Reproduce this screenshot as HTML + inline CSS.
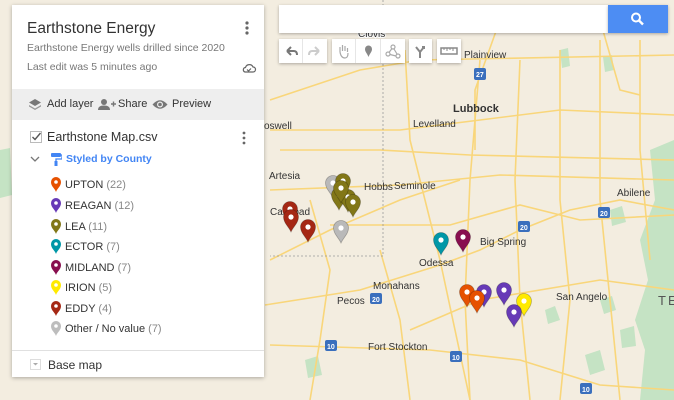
<!DOCTYPE html>
<html><head><meta charset="utf-8"><style>
*{margin:0;padding:0;box-sizing:border-box}
body{width:674px;height:400px;overflow:hidden;font-family:"Liberation Sans",Roboto,sans-serif;background:#f3ede0;position:relative}
#map{position:absolute;left:0;top:0}
.panel{position:absolute;left:12px;top:5px;width:252px;height:372px;background:#fff;box-shadow:0 1px 4px rgba(0,0,0,.3)}
.t{position:absolute;white-space:nowrap}
.bar{position:absolute;left:0;top:84px;width:252px;height:31px;background:#eeeeee}
.leg{position:absolute;left:42px;width:200px;font-size:11px;color:#333;height:20px;white-space:nowrap}
.leg span{color:#888}
.leg svg{position:absolute;left:-4px;top:-3px}
.leg b{font-weight:normal;position:absolute;left:11px;top:0;white-space:nowrap}
.search{position:absolute;left:279px;top:5px;width:329px;height:28px;background:#fff;box-shadow:0 1px 3px rgba(0,0,0,.3)}
.sbtn{position:absolute;left:608px;top:5px;width:60px;height:28px;background:#4d8df3;box-shadow:0 1px 3px rgba(0,0,0,.3)}
.tb{position:absolute;top:39px;height:24px;background:#fff;box-shadow:0 1px 3px rgba(0,0,0,.3)}
.tb div{position:absolute;top:0;height:24px;border-right:1px solid #e6e6e6}
</style></head><body>
<svg id="map" width="674" height="400" viewBox="0 0 674 400">
<rect width="674" height="400" fill="#f3ede0"/>
<g fill="#c5e3c4">
<path d="M650 150 L674 140 L674 400 L640 400 L645 350 L635 320 L648 280 L640 240 L655 200 Z"/>
<path d="M610 210 L622 206 L626 222 L612 226 Z"/>
<path d="M600 300 L612 296 L616 310 L604 314 Z"/>
<path d="M620 330 L634 326 L636 346 L622 348 Z"/>
<path d="M545 310 L555 306 L560 320 L548 324 Z"/>
<path d="M585 355 L600 350 L605 370 L590 375 Z"/>
<path d="M560 50 L568 48 L570 66 L562 68 Z"/>
<path d="M603 57 L612 55 L614 70 L605 72 Z"/>
<path d="M305 360 L318 356 L322 375 L308 378 Z"/>
<path d="M0 150 L10 148 L12 195 L0 198 Z"/>
</g>
<g fill="none" stroke="#f9d67a" stroke-width="1.6">
<path d="M270 130 L400 130 L560 110 L674 115"/>
<path d="M280 150 L380 150 L470 155 L674 160"/>
<path d="M270 190 L400 185 L500 175 L674 180"/>
<path d="M330 225 L450 225 L520 205 L580 220 L674 215"/>
<path d="M265 305 L360 290 L440 265 L480 250 L520 230 L570 210 L620 200 L674 210"/>
<path d="M270 345 L430 350 L520 360 L600 385 L674 390"/>
<path d="M405 50 L410 140 L440 260 L470 400"/>
<path d="M480 60 L470 180 L465 300 L470 400"/>
<path d="M520 60 L515 180 L520 300 L530 400"/>
<path d="M560 50 L560 200 L570 300 L560 400"/>
<path d="M600 40 L600 200 L610 300 L620 400"/>
<path d="M640 40 L640 150 L650 260"/>
<path d="M500 20 L475 90 L475 150"/>
<path d="M270 100 L360 70 L420 60 L674 55"/>
<path d="M310 200 L330 270 L320 340 L310 400"/>
<path d="M380 250 L400 320 L410 400"/>
<path d="M270 260 L330 230 L400 200 L460 180"/>
<path d="M480 300 L600 280 L674 290"/>
<path d="M410 330 L480 300"/>
<path d="M600 20 L620 90 L640 95"/>
</g>
<g fill="none" stroke="#999" stroke-width=".8" stroke-dasharray="2 2">
<path d="M383 0 L383 256 L270 256"/>
</g>
<g font-size="10" fill="#333" font-family="Liberation Sans,sans-serif">
<text x="358" y="37" stroke="#fff" stroke-width="2" paint-order="stroke">Clovis</text>
<text x="464" y="58">Plainview</text>
<text x="453" y="112" font-weight="bold" font-size="11">Lubbock</text>
<text x="413" y="127">Levelland</text>
<text x="264" y="129">oswell</text>
<text x="269" y="179">Artesia</text>
<text x="364" y="190">Hobbs</text>
<text x="394" y="189">Seminole</text>
<text x="270" y="215">Carlsbad</text>
<text x="480" y="245">Big Spring</text>
<text x="419" y="266">Odessa</text>
<text x="373" y="289">Monahans</text>
<text x="337" y="304">Pecos</text>
<text x="368" y="350">Fort Stockton</text>
<text x="556" y="300">San Angelo</text>
<text x="617" y="196">Abilene</text>
<text x="658" y="305" font-size="13" letter-spacing="2" fill="#555">TE</text>
</g>
<g font-size="7" font-weight="bold" fill="#fff">
<g><rect x="474" y="68" width="12" height="12" rx="2" fill="#3a6fbd"/><text x="476" y="77">27</text></g>
<g><rect x="518" y="221" width="12" height="11" rx="2" fill="#3a6fbd"/><text x="520" y="230">20</text></g>
<g><rect x="598" y="207" width="12" height="11" rx="2" fill="#3a6fbd"/><text x="600" y="216">20</text></g>
<g><rect x="370" y="293" width="12" height="11" rx="2" fill="#3a6fbd"/><text x="372" y="302">20</text></g>
<g><rect x="325" y="340" width="12" height="11" rx="2" fill="#3a6fbd"/><text x="327" y="349">10</text></g>
<g><rect x="450" y="351" width="12" height="11" rx="2" fill="#3a6fbd"/><text x="452" y="360">10</text></g>
<g><rect x="580" y="383" width="12" height="11" rx="2" fill="#3a6fbd"/><text x="582" y="392">10</text></g>
</g>
<defs>
<g id="p"><path d="M0 0 C-2 -5 -7.5 -9 -7.5 -15 A7.5 7.5 0 1 1 7.5 -15 C7.5 -9 2 -5 0 0Z" stroke="rgba(0,0,0,.25)" stroke-width=".8"/><circle cx="0" cy="-15" r="2.6" fill="#fff"/></g>
</defs>
<use href="#p" x="333" y="198" fill="#b9b9b9"/>
<use href="#p" x="343" y="196" fill="#827717"/>
<use href="#p" x="339" y="210" fill="#827717"/>
<use href="#p" x="348" y="212" fill="#827717"/>
<use href="#p" x="353" y="217" fill="#827717"/>
<use href="#p" x="341" y="203" fill="#827717"/>
<use href="#p" x="290" y="224" fill="#a52714"/>
<use href="#p" x="291" y="232" fill="#a52714"/>
<use href="#p" x="308" y="242" fill="#a52714"/>
<use href="#p" x="341" y="243" fill="#b9b9b9"/>
<use href="#p" x="441" y="255" fill="#0097a7"/>
<use href="#p" x="463" y="252" fill="#880e4f"/>
<use href="#p" x="484" y="307" fill="#673ab7"/>
<use href="#p" x="467" y="307" fill="#e65100"/>
<use href="#p" x="477" y="313" fill="#e65100"/>
<use href="#p" x="504" y="305" fill="#673ab7"/>
<use href="#p" x="524" y="316" fill="#ffea00"/>
<use href="#p" x="514" y="327" fill="#673ab7"/>
</svg>

<div class="search"></div>
<div class="sbtn"><svg width="60" height="28"><circle cx="28" cy="12.5" r="4" fill="none" stroke="#fff" stroke-width="2"/><path d="M31 15.5 L35 19.5" stroke="#fff" stroke-width="2.4"/></svg></div>
<div class="tb" style="left:279px;width:48px"><div style="left:0;width:24px"></div>
<svg width="48" height="24"><path d="M8 12 L12 8 M8 12 L12 16 M8 12 H15 Q18 12 18 16" fill="none" stroke="#777" stroke-width="2"/><path d="M40 12 L36 8 M40 12 L36 16 M40 12 H33 Q30 12 30 16" fill="none" stroke="#ccc" stroke-width="2"/></svg></div>
<div class="tb" style="left:332px;width:73px"><div style="left:0;width:24px"></div><div style="left:24px;width:25px"></div>
<svg width="73" height="24"><path d="M8 13 V8 M10.5 12 V6 M13 12 V7 M15.5 13 V9 M8 13 Q9 19 13 19 Q16 19 16 14" fill="none" stroke="#aaa" stroke-width="1.2"/><path d="M36.5 18 C35 14 33 13 33 10 A3.5 3.5 0 1 1 40 10 C40 13 38 14 36.5 18Z" fill="#888"/><g fill="none" stroke="#aaa" stroke-width="1.2"><circle cx="56" cy="15" r="2"/><circle cx="61" cy="8" r="2"/><circle cx="66" cy="17" r="2"/><path d="M57 13.5 L60 9.5 M58 15.5 L64 17 M62 10 L65 15"/></g></svg></div>
<div class="tb" style="left:409px;width:23px"><svg width="23" height="24"><path d="M7 8 L11 13 V19 M11 13 L15 8 M13 8 H15 V10" fill="none" stroke="#888" stroke-width="2"/></svg></div>
<div class="tb" style="left:437px;width:24px"><svg width="24" height="24"><rect x="4" y="9" width="16" height="6" fill="none" stroke="#888" stroke-width="1.5"/><path d="M7 9 V11 M10 9 V12 M13 9 V11 M16 9 V12" stroke="#888"/></svg></div>

<div class="panel">
<div class="t" style="left:15px;top:15px;font-size:15.5px;color:#333">Earthstone Energy</div>
<svg class="t" style="left:232px;top:15px" width="6" height="16"><circle cx="3" cy="3" r="1.6" fill="#666"/><circle cx="3" cy="8" r="1.6" fill="#666"/><circle cx="3" cy="13" r="1.6" fill="#666"/></svg>
<div class="t" style="left:15px;top:37px;font-size:10.5px;color:#777">Earthstone Energy wells drilled since 2020</div>
<div class="t" style="left:15px;top:56px;font-size:10.5px;color:#777">Last edit was 5 minutes ago</div>
<svg class="t" style="left:229px;top:57px" width="16" height="12"><path d="M4 10 H12 A2.5 2.5 0 0 0 12 5 A4 4 0 0 0 4.5 5.5 A2.3 2.3 0 0 0 4 10Z M6 7.5 L7.5 9 L10 6.5" fill="none" stroke="#666" stroke-width="1.2"/></svg>
<div class="bar">
<svg class="t" style="left:16px;top:9px" width="14" height="13"><path d="M7 1 L13 4.5 L7 8 L1 4.5Z" fill="#777"/><path d="M1 7 L7 10.5 L13 7 L13 8.5 L7 12 L1 8.5Z" fill="#999"/></svg>
<div class="t" style="left:35px;top:9px;font-size:11px;color:#333">Add layer</div>
<svg class="t" style="left:86px;top:9px" width="18" height="13"><circle cx="6" cy="4" r="3" fill="#777"/><path d="M0 12 Q0 7.5 6 7.5 Q12 7.5 12 12Z" fill="#777"/><path d="M13 6 H18 M15.5 3.5 V8.5" stroke="#777" stroke-width="1.4"/></svg>
<div class="t" style="left:106px;top:9px;font-size:11px;color:#333">Share</div>
<svg class="t" style="left:140px;top:10px" width="16" height="11"><path d="M0.5 5.5 Q8 -3 15.5 5.5 Q8 14 0.5 5.5Z" fill="#777"/><circle cx="8" cy="5.5" r="3" fill="#eee"/><circle cx="8" cy="5.5" r="1.8" fill="#777"/></svg>
<div class="t" style="left:160px;top:9px;font-size:11px;color:#333">Preview</div>
</div>
<svg class="t" style="left:18px;top:126px" width="12" height="12"><rect x=".5" y=".5" width="11" height="11" fill="#fff" stroke="#bbb"/><path d="M2.5 6 L5 8.5 L10.5 2" fill="none" stroke="#555" stroke-width="1.4"/></svg>
<div class="t" style="left:35px;top:125px;font-size:12.5px;color:#333">Earthstone Map.csv</div>
<svg class="t" style="left:229px;top:126px" width="6" height="14"><circle cx="3" cy="2" r="1.4" fill="#666"/><circle cx="3" cy="7" r="1.4" fill="#666"/><circle cx="3" cy="12" r="1.4" fill="#666"/></svg>
<svg class="t" style="left:18px;top:151px" width="10" height="7"><path d="M1 1 L5 5 L9 1" fill="none" stroke="#777" stroke-width="1.3"/></svg>
<svg class="t" style="left:38px;top:148px" width="12" height="13"><rect x="1" y="0" width="10" height="4" rx="1" fill="#4285f4"/><path d="M11 2 H12 V6 H6 V8" fill="none" stroke="#4285f4" stroke-width="1.3"/><rect x="4.5" y="8" width="3" height="5" fill="#4285f4"/></svg>
<div class="t" style="left:54px;top:148px;font-size:10.5px;color:#4285f4;font-weight:bold">Styled by County</div>

<svg width="0" height="0" style="position:absolute"><defs><g id="lp"><path d="M6 16 C5 12.5 1 10.5 1 6 A5 5 0 1 1 11 6 C11 10.5 7 12.5 6 16Z"/><circle cx="6" cy="6" r="1.8" fill="#fff"/></g></defs></svg>
<div class="leg" style="top:174px"><svg width="12" height="17" fill="#e65100"><use href="#lp"/></svg><b>UPTON <span>(22)</span></b></div>
<div class="leg" style="top:195px"><svg width="12" height="17" fill="#673ab7"><use href="#lp"/></svg><b>REAGAN <span>(12)</span></b></div>
<div class="leg" style="top:216px"><svg width="12" height="17" fill="#827717"><use href="#lp"/></svg><b>LEA <span>(11)</span></b></div>
<div class="leg" style="top:236px"><svg width="12" height="17" fill="#0097a7"><use href="#lp"/></svg><b>ECTOR <span>(7)</span></b></div>
<div class="leg" style="top:257px"><svg width="12" height="17" fill="#880e4f"><use href="#lp"/></svg><b>MIDLAND <span>(7)</span></b></div>
<div class="leg" style="top:277px"><svg width="12" height="17" fill="#ffea00"><use href="#lp"/></svg><b>IRION <span>(5)</span></b></div>
<div class="leg" style="top:298px"><svg width="12" height="17" fill="#a52714"><use href="#lp"/></svg><b>EDDY <span>(4)</span></b></div>
<div class="leg" style="top:318px"><svg width="12" height="17" fill="#bdbdbd"><use href="#lp"/></svg><b>Other / No value <span>(7)</span></b></div>
<div class="t" style="left:0;top:345px;width:252px;border-top:1px solid #e0e0e0"></div>
<svg class="t" style="left:18px;top:354px" width="11" height="11"><rect x=".5" y=".5" width="10" height="10" fill="#fff" stroke="#ddd"/><path d="M3 4 L5.5 6.5 L8 4Z" fill="#aaa"/></svg>
<div class="t" style="left:36px;top:353px;font-size:12px;color:#333">Base map</div>
</div>
</body></html>
